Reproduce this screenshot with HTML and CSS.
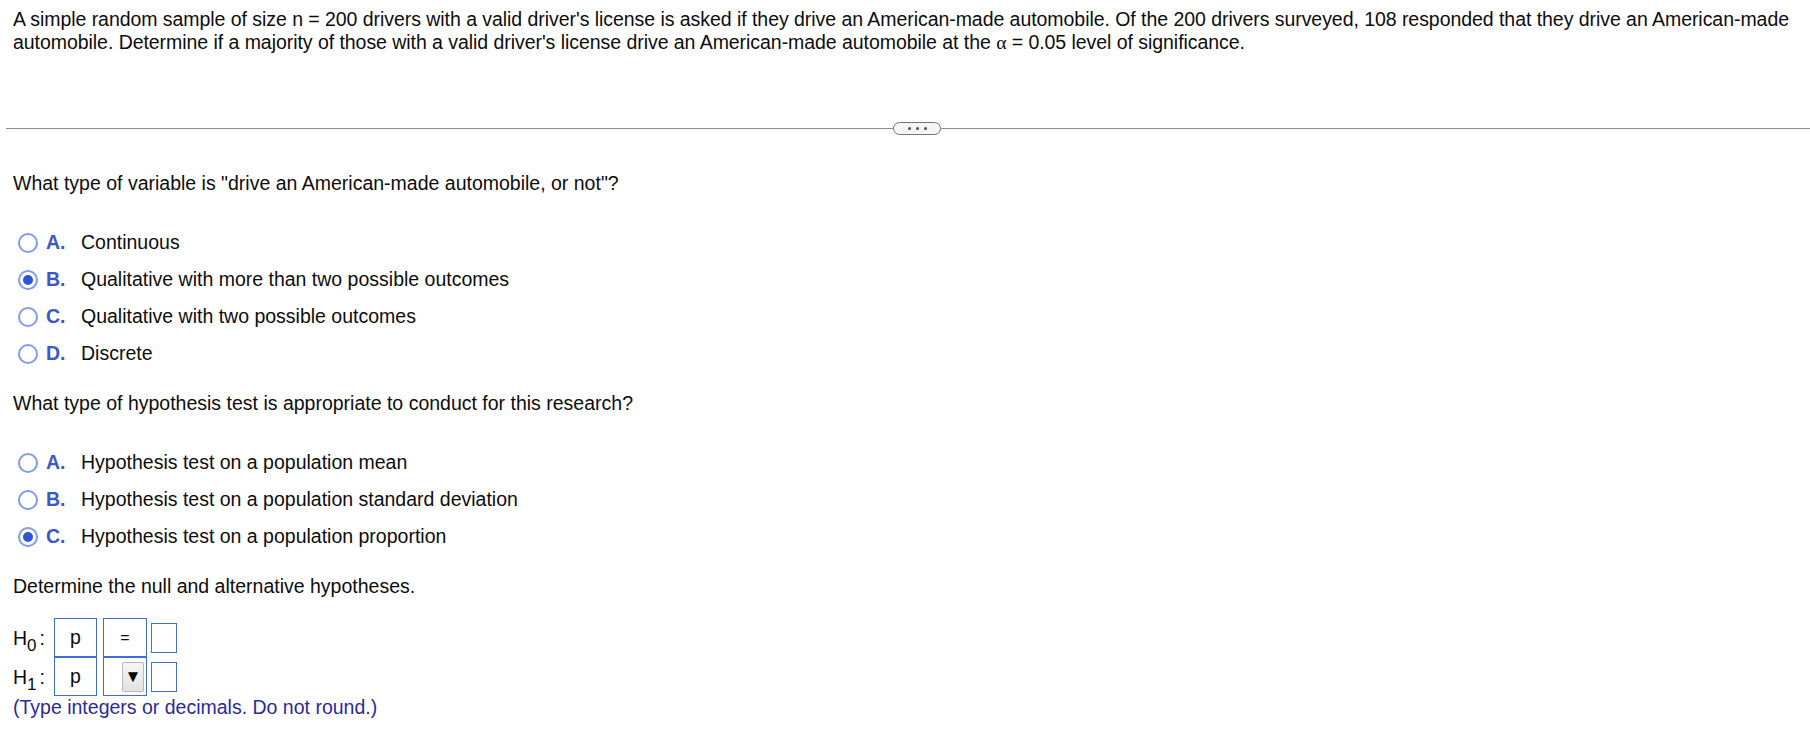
FILE: index.html
```html
<!DOCTYPE html>
<html>
<head>
<meta charset="utf-8">
<link rel="stylesheet" href="styles.css">
</head>
<body>
<div class="page">
  <p class="stem">A simple random sample of size n = 200 drivers with a valid driver's license is asked if they drive an American-made automobile. Of the 200 drivers surveyed, 108 responded that they drive an <span class="nw">American-made</span> automobile. Determine if a majority of those with a valid driver's license drive an American-made automobile at the <span class="alpha">α</span> = 0.05 level of significance.</p>

  <div class="divider">
    <div class="rule rule-left"></div>
    <div class="pill"><span class="dot"></span><span class="dot"></span><span class="dot"></span></div>
    <div class="rule rule-right"></div>
  </div>

  <p class="q q1">What type of variable is "drive an American-made automobile, or not"?</p>
  <ul class="opts opts1">
    <li class="opt"><span class="radio"></span><span class="letter">A.</span><span>Continuous</span></li>
    <li class="opt"><span class="radio on"></span><span class="letter">B.</span><span>Qualitative with more than two possible outcomes</span></li>
    <li class="opt"><span class="radio"></span><span class="letter">C.</span><span>Qualitative with two possible outcomes</span></li>
    <li class="opt"><span class="radio"></span><span class="letter">D.</span><span>Discrete</span></li>
  </ul>

  <p class="q q2">What type of hypothesis test is appropriate to conduct for this research?</p>
  <ul class="opts opts2">
    <li class="opt"><span class="radio"></span><span class="letter">A.</span><span>Hypothesis test on a population mean</span></li>
    <li class="opt"><span class="radio"></span><span class="letter">B.</span><span>Hypothesis test on a population standard deviation</span></li>
    <li class="opt"><span class="radio on"></span><span class="letter">C.</span><span>Hypothesis test on a population proportion</span></li>
  </ul>

  <p class="q q3">Determine the null and alternative hypotheses.</p>
  <div class="hyp">
    <div class="hrow">
      <span class="hlabel">H<sub>0</sub>:</span>
      <span class="box pbox">p</span>
      <span class="box opbox">=</span>
      <span class="blank"></span>
    </div>
    <div class="hrow">
      <span class="hlabel">H<sub>1</sub>:</span>
      <span class="box pbox">p</span>
      <span class="box opbox sel"><span class="dd">&#9660;</span></span>
      <span class="blank"></span>
    </div>
  </div>
  <p class="note">(Type integers or decimals. Do not round.)</p>
</div>
</body>
</html>
```

FILE: styles.css
```css
html, body {
  margin: 0;
  padding: 0;
  background: #ffffff;
}
body {
  font-family: "Liberation Sans", Arial, sans-serif;
  font-size: 19.5px;
  line-height: 23px;
  color: #0d0d0d;
}
.page {
  padding: 8px 0 0 13px;
}
p { margin: 0; }
.stem {
  padding-right: 0;
  letter-spacing: -0.05px;
}
.nw {
  white-space: nowrap;
}
.alpha {
  font-family: "Liberation Serif", "Times New Roman", serif;
}
.divider {
  display: flex;
  align-items: center;
  margin: 67px 0 0 -7px;
  height: 14px;
}
.rule {
  height: 1px;
  background: #8a8f98;
}
.rule-left { flex: 887; }
.rule-right { flex: 869; }
.pill {
  width: 46px;
  height: 11px;
  border: 1px solid #6e7480;
  border-radius: 7px;
  background: #f4f5f7;
  display: flex;
  align-items: center;
  justify-content: center;
  gap: 5px;
}
.dot {
  width: 3px;
  height: 3px;
  border-radius: 50%;
  background: #4a4f58;
}
.q1 { margin-top: 37px; }
.opts {
  list-style: none;
  margin: 0;
  padding: 0;
}
.opts1 { margin-top: 29px; }
.opt {
  display: flex;
  align-items: center;
  height: 37px;
}
.radio {
  box-sizing: border-box;
  width: 20px;
  height: 20px;
  border: 2px solid #7f9af0;
  border-radius: 50%;
  margin: 0 8px 0 5px;
  display: flex;
  align-items: center;
  justify-content: center;
  flex: none;
}
.radio.on::after {
  content: "";
  width: 10px;
  height: 10px;
  border-radius: 50%;
  background: #2e55d6;
}
.letter {
  font-weight: bold;
  color: #3a58c6;
  width: 35px;
  flex: none;
}
.q2 { margin-top: 20px; }
.opts2 { margin-top: 29px; }
.q3 { margin-top: 20px; }
.hyp {
  margin-top: 20px;
  display: flex;
  flex-direction: column;
}
.hrow {
  display: flex;
  align-items: center;
}
.hlabel {
  width: 41px;
  flex: none;
  padding-top: 2px;
}
.hlabel sub {
  font-size: 17px;
  vertical-align: -6px;
  line-height: 0;
  margin-right: 3px;
}
.box {
  box-sizing: border-box;
  height: 39px;
  border: 1px solid #3f6fd4;
  display: flex;
  align-items: center;
  justify-content: center;
  flex: none;
}
.pbox {
  width: 43px;
}
.opbox {
  width: 44px;
  margin-left: 6px;
  font-size: 16px;
}
.opbox.sel {
  justify-content: flex-end;
  padding-right: 2px;
}
.dd {
  box-sizing: border-box;
  width: 22px;
  height: 30px;
  border: 1px solid #b8b8b8;
  border-radius: 2px;
  background: linear-gradient(#f6f6f6, #e2e2e2);
  color: #000;
  font-size: 17px;
  display: flex;
  align-items: center;
  justify-content: center;
}
.blank {
  box-sizing: border-box;
  width: 26px;
  height: 30px;
  border: 1px solid #3f6fd4;
  margin-left: 4px;
  flex: none;
}
.note {
  color: #2a2a9c;
}
```
